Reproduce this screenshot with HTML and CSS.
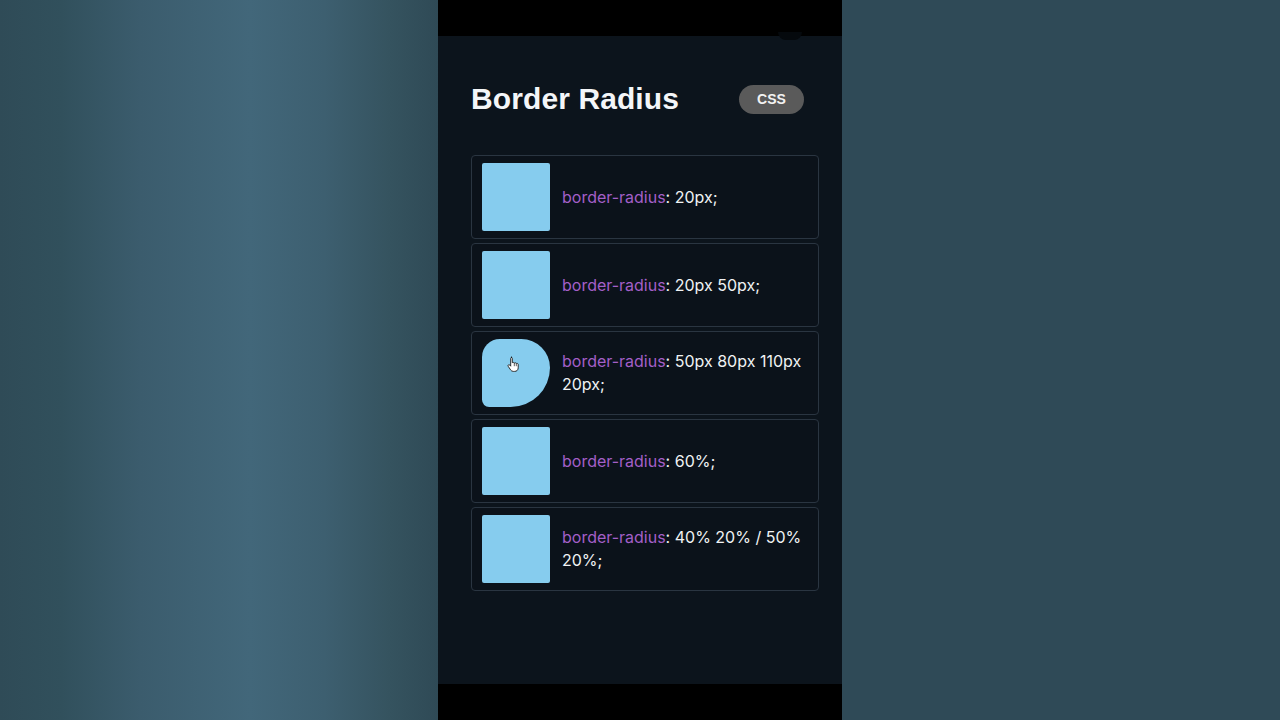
FILE: index.html
```html
<!DOCTYPE html>
<html lang="en">
<head>
<meta charset="utf-8">
<title>Border Radius</title>
<link rel="stylesheet" href="styles.css">
</head>
<body>
<div class="stage">
  <div class="side side-left"></div>
  <div class="phone">
    <div class="bar bar-top"><span class="notch"></span></div>
    <main class="screen">
      <header class="head">
        <h1 class="title">Border Radius</h1>
        <span class="badge">CSS</span>
      </header>
      <ul class="list">
        <li class="card">
          <div class="box"></div>
          <p class="code"><span class="prop">border-radius</span>: 20px;</p>
        </li>
        <li class="card">
          <div class="box"></div>
          <p class="code"><span class="prop">border-radius</span>: 20px 50px;</p>
        </li>
        <li class="card">
          <div class="box box-shaped">
            <svg class="cursor" width="13" height="16" viewBox="0 0 13 16">
              <path d="M4 1.2c.8 0 1.3.5 1.3 1.3v4.2c.3-.3 1.6-.4 2 .3.5-.3 1.6-.3 2 .4.6-.3 1.8 0 1.9 1v3.4c0 2.2-1.5 3.6-3.6 3.6H6.3c-1.2 0-2-.6-2.7-1.5L1.2 10.3c-.4-.6-.2-1.3.4-1.5.5-.2 1 0 1.3.4l.8 1V2.5c0-.8.5-1.3 1.3-1.3z" fill="#ffffff" stroke="#1a1a1a" stroke-width="0.9" stroke-linejoin="round"/>
              <path d="M7.3 7v3.2M9.3 7.4v2.8" stroke="#1a1a1a" stroke-width="0.7" fill="none"/>
            </svg>
          </div>
          <p class="code"><span class="prop">border-radius</span>: 50px 80px 110px 20px;</p>
        </li>
        <li class="card">
          <div class="box"></div>
          <p class="code"><span class="prop">border-radius</span>: 60%;</p>
        </li>
        <li class="card">
          <div class="box"></div>
          <p class="code"><span class="prop">border-radius</span>: 40% 20% / 50% 20%;</p>
        </li>
      </ul>
    </main>
    <div class="bar bar-bottom"></div>
  </div>
  <div class="side side-right"></div>
</div>
</body>
</html>
```

FILE: styles.css
```css
* { box-sizing: border-box; }
html, body { margin: 0; padding: 0; }
body { width: 1280px; height: 720px; overflow: hidden; background: #2f4a57; }

.stage { display: flex; width: 1280px; height: 720px; }

.side { width: 438px; height: 720px; }
.side-left {
  background: linear-gradient(90deg, #2f4b57 0%, #31505c 14%, #3b5c6d 32%, #42677a 57%, #3d5f70 74%, #35535f 89%, #2f4a56 100%);
}
.side-right { background: #2f4a57; }

.phone { width: 404px; height: 720px; display: flex; flex-direction: column; }

.bar { background: #000000; flex: none; }
.bar-top { height: 36px; position: relative; }
.notch {
  position: absolute; left: 340px; bottom: -4px; width: 24px; height: 8px;
  border-radius: 0 0 12px 12px; background: #05090d;
}
.bar-bottom { height: 36px; }

.screen {
  flex: 1; background: #0c141c;
  padding: 48px 23px 0 33px;
  font-family: Inter, "Noto Sans", sans-serif;
}

.head {
  display: flex; align-items: center; justify-content: space-between;
  height: 30px; padding-right: 15px;
}
.title {
  margin: 0; font-family: "Liberation Sans", Arial, sans-serif;
  font-weight: 700; font-size: 30px; line-height: 30px; color: #f4f6f8;
  letter-spacing: 0.1px;
}
.badge {
  display: flex; align-items: center; justify-content: center;
  width: 65px; height: 29px; border-radius: 15px; background: #5a5a5a;
  color: #f2f2f2; font-family: "Liberation Sans", Arial, sans-serif;
  font-weight: 700; font-size: 14px;
}

.list {
  list-style: none; margin: 41px 0 0; padding: 0;
  display: flex; flex-direction: column; gap: 4px;
}
.card {
  display: flex; align-items: center; gap: 12px;
  height: 84px; padding: 0 10px;
  border: 1px solid #2a3541; border-radius: 4px;
  background: #0b121a;
}
.box {
  flex: none; width: 68px; height: 68px; background: #86ccee;
  border-radius: 2px; position: relative;
}
.box-shaped { border-radius: 50px 80px 110px 20px; }
.cursor { position: absolute; left: 25px; top: 17px; }

.code {
  margin: 0; font-size: 16px; line-height: 23px; color: #f0f2f4;
}
.prop { color: #a45fc8; }
```
